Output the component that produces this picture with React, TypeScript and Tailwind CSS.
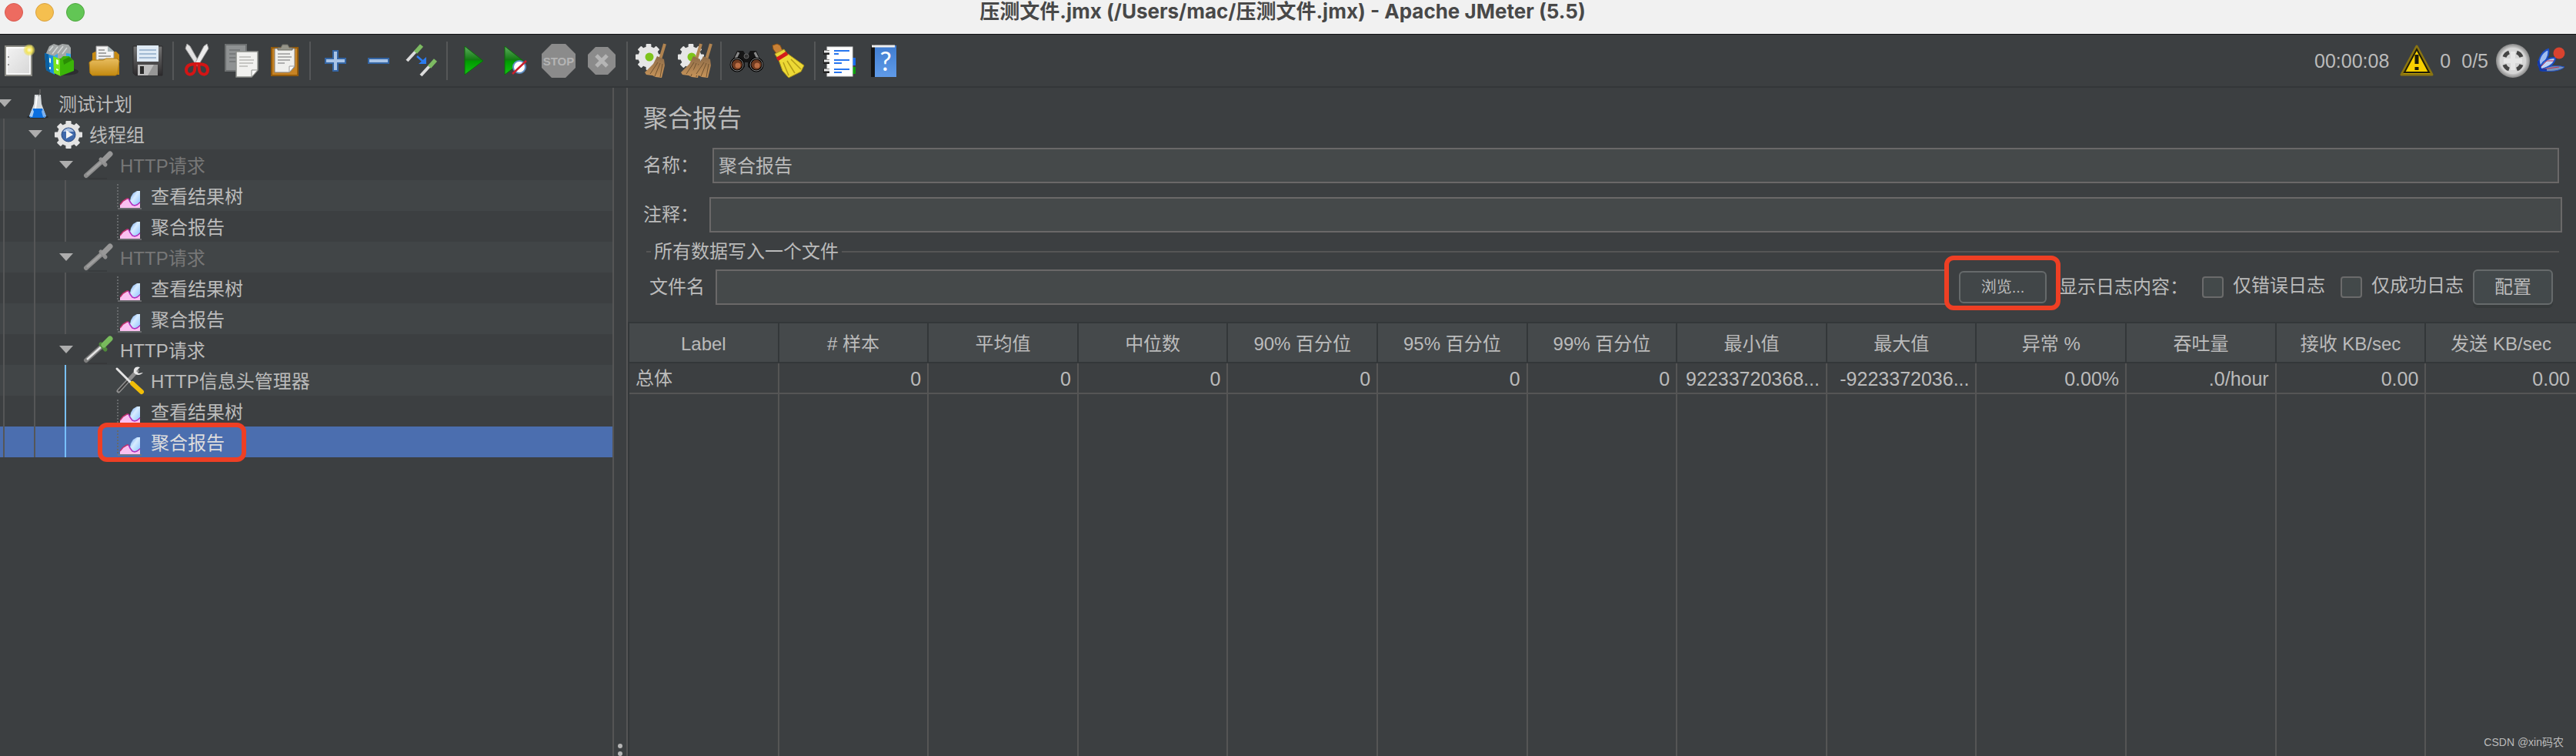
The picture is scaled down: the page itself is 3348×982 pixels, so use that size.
import React, { useState } from 'react'

type IconProps = { children: React.ReactNode; size?: string; box?: string }

const Icon: React.FC<IconProps> = ({ children, size = 'size-11', box = '0 0 44 44' }) => (
  <svg viewBox={box} className={`${size} shrink-0 overflow-visible`} fill="none" aria-hidden="true">
    {children}
  </svg>
)

const Gradients: React.FC = () => (
  <svg width="0" height="0" className="absolute" aria-hidden="true">
    <defs>
      <linearGradient id="paper" x1="0" y1="0" x2="1" y2="1">
        <stop offset="0" stopColor="#f4f4f4" />
        <stop offset="1" stopColor="#d6d6d6" />
      </linearGradient>
      <linearGradient id="folder" x1="0" y1="0" x2="0" y2="1">
        <stop offset="0" stopColor="#e8bd60" />
        <stop offset="1" stopColor="#c48a10" />
      </linearGradient>
      <linearGradient id="play" x1="0" y1="0" x2="0" y2="1">
        <stop offset="0" stopColor="#5fae5f" />
        <stop offset="0.48" stopColor="#127a12" />
        <stop offset="0.52" stopColor="#009a00" />
        <stop offset="1" stopColor="#12c412" />
      </linearGradient>
      <linearGradient id="steel" x1="0" y1="0" x2="0" y2="1">
        <stop offset="0" stopColor="#777" />
        <stop offset="1" stopColor="#2c2a2c" />
      </linearGradient>
      <linearGradient id="straw" x1="0" y1="0" x2="0" y2="1">
        <stop offset="0" stopColor="#8d6b48" />
        <stop offset="1" stopColor="#c9955a" />
      </linearGradient>
      <linearGradient id="book" x1="0" y1="0" x2="0" y2="1">
        <stop offset="0" stopColor="#3f7cd0" />
        <stop offset="1" stopColor="#609be8" />
      </linearGradient>
      <linearGradient id="peak" x1="0" y1="0" x2="1" y2="1">
        <stop offset="0" stopColor="#5d9bf0" />
        <stop offset="0.45" stopColor="#d8ecff" />
        <stop offset="1" stopColor="#8fc3ff" />
      </linearGradient>
      <radialGradient id="ball">
        <stop offset="0" stopColor="#fff" />
        <stop offset="0.7" stopColor="#ddd" />
        <stop offset="1" stopColor="#888" />
      </radialGradient>
      <radialGradient id="glow">
        <stop offset="0" stopColor="#fffde0" />
        <stop offset="0.5" stopColor="#f5e65a" />
        <stop offset="1" stopColor="#e8dc50" stopOpacity="0.3" />
      </radialGradient>
    </defs>
  </svg>
)

const NewIcon = () => (
  <Icon>
    <rect x="5" y="3" width="34" height="38" fill="url(#paper)" stroke="#8a8a84" strokeWidth="2" />
    <rect x="7" y="5" width="30" height="34" stroke="#fff" strokeWidth="1.5" />
    <path d="M8 16h2v2H8zM8 26h2v2H8z" fill="#999" />
    <circle cx="36" cy="8" r="7.5" fill="url(#glow)" />
  </Icon>
)

const TemplatesIcon = () => (
  <Icon>
    <ellipse cx="26" cy="36" rx="18" ry="5" fill="#2c2e30" />
    <path d="M2 12L6 3l6-3 6 2 5-2 8 1 3 4v14H2z" fill="#a3a7a7" />
    <path d="M6 9l5-6M10 13l7-9M17 12l7-9M23 13l6-8" stroke="#d3d7d7" strokeWidth="1.500" />
    <path d="M0 12l13 4v24L2 34z" fill="#1d8fdc" />
    <path d="M0 12l5 1.500 2 24-5-3.500z" fill="#0b5fa0" />
    <path d="M13 15l4-2v6l-4 2zM28 12l6 1v7l-6 2z" fill="#39a9ea" />
    <path d="M11 16l10 4v22l-9-4z" fill="#7be61c" />
    <path d="M20 20l4-4h8l6 6v13l-18 7z" fill="#3bb408" />
    <path d="M24 21l8-4 4 4-11 6z" fill="#2a8d04" />
    <path d="M15 20l3 1v6l-3-1zM15 32l3 1v2l-3-1zM6 18l2 1v6l-2-1zM6 30h2v3H6z" fill="#eaffea" />
  </Icon>
)

const OpenIcon = () => (
  <Icon>
    <path d="M6 12l4-2h27l4 4v26H6z" fill="#c68a12" />
    <path d="M11 3h15l8 7v14H11z" fill="#f2f2f2" stroke="#999" />
    <path d="M26 3v7h8z" fill="#a9b6b8" />
    <path d="M14 8h8M14 12h10M14 16h16M14 20h14" stroke="#8d8d8d" strokeWidth="1.500" />
    <path d="M2 24l4-3h14l4-2h14l3 3-2 17-3 2H6l-3-3z" fill="url(#folder)" stroke="#b47d0c" />
  </Icon>
)

const SaveIcon = () => (
  <Icon>
    <path d="M3 3h38v38H6l-3-3z" fill="url(#steel)" stroke="#2b2b2d" />
    <rect x="8" y="2" width="28" height="21" fill="#dfeaf5" />
    <path d="M11 8h22M11 13h22M11 18h22" stroke="#8fabc8" strokeWidth="1.500" />
    <rect x="9" y="27" width="26" height="14" fill="#bdbdbd" />
    <path d="M22 41l8-14h5v14z" fill="#969696" />
    <rect x="12" y="29" width="5" height="10" fill="#2a2a2a" />
  </Icon>
)

const CutIcon = () => (
  <Icon>
    <path d="M7 0l4 3 13 23-4 3L5 6z" fill="#e2e2e2" stroke="#9b9b9b" />
    <path d="M33 0l-4 3-12 23 4 3L35 6z" fill="#ececec" stroke="#a0a0a0" />
    <path d="M18 26c-5 0-12 1-12 8 0 8 10 7 11 0zM22 26c5 0 12 1 12 8 0 8-10 7-11 0z" stroke="#d41515" strokeWidth="4" />
  </Icon>
)

const CopyIcon = () => (
  <Icon>
    <rect x="1" y="1" width="27" height="34" fill="#8f9293" stroke="#6d7071" strokeWidth="2" />
    <path d="M6 8h14M6 13h9M6 18h9M6 23h9" stroke="#717475" strokeWidth="1.500" />
    <path d="M15 10h28v24l-8 9H15z" fill="#f1f1ef" stroke="#8c8e8a" strokeWidth="1.500" />
    <path d="M43 34h-8v9z" fill="#fff" stroke="#8c8e8a" />
    <path d="M19 17h15M19 21h19M19 25h18M19 29h11" stroke="#b9b9b6" strokeWidth="1.500" />
  </Icon>
)

const PasteIcon = () => (
  <Icon>
    <rect x="5" y="5" width="34" height="36" fill="#c78324" stroke="#925a0b" strokeWidth="2" />
    <path d="M9 6h26v24l-7 7H9z" fill="#efefed" stroke="#85807a" />
    <path d="M35 29h-7v8z" fill="#fff" stroke="#999" />
    <path d="M13 13h16M13 17h18M13 21h16M13 25h9" stroke="#9a9a9a" strokeWidth="1.500" />
    <path d="M13 8V5h4l2-4h7l2 4h4v3z" fill="#96958a" stroke="#6b6b62" />
  </Icon>
)

const PlusIcon = () => (
  <Icon>
    <path d="M19 9h6v10h10v6H25v10h-6V25H9v-6h10z" fill="#a9c4e6" stroke="#3465a4" strokeWidth="2" />
  </Icon>
)

const MinusIcon = () => (
  <Icon>
    <path d="M9 19h26v6H9z" fill="#a9c4e6" stroke="#3465a4" strokeWidth="2" />
  </Icon>
)

const ToggleIcon = () => (
  <Icon>
    <path d="M3 22L15 9" stroke="#dcdcdc" strokeWidth="4" />
    <path d="M14 11l8-9" stroke="#7dbb62" strokeWidth="5.500" />
    <path d="M21 41l12-13" stroke="#dcdcdc" strokeWidth="4" />
    <path d="M32 30l8-9" stroke="#7dbb62" strokeWidth="5.500" />
    <path d="M16 16l8 7" stroke="#2b7bf0" strokeWidth="2.500" />
    <path d="M28 17v9H18z" fill="#2b7bf0" />
  </Icon>
)

const PlayIcon = () => (
  <Icon>
    <path d="M12 3l24 19-24 18z" fill="url(#play)" stroke="#0c6a0c" />
  </Icon>
)

const PlayNoPauseIcon = () => (
  <Icon>
    <path d="M8 3l24 19L8 40z" fill="url(#play)" stroke="#0c6a0c" />
    <circle cx="27" cy="30" r="8" fill="#fff" stroke="#5f8fc4" strokeWidth="2" />
    <path d="M18 39l18-17" stroke="#c8202c" strokeWidth="2.500" />
  </Icon>
)

const StopIcon = () => (
  <Icon>
    <path d="M13 0h18l13 13v18L31 44H13L0 31V13z" fill="#8b8b8b" />
    <text x="22" y="28" textAnchor="middle" fontSize="15" fontWeight="bold" fill="#b4b4b4">
      STOP
    </text>
  </Icon>
)

const ShutdownIcon = () => (
  <Icon>
    <path d="M14 4h16l10 10v16L30 40H14L4 30V14z" fill="#8b8b8b" />
    <path d="M15 15l14 14M29 15L15 29" stroke="#b5b5b5" strokeWidth="5" />
  </Icon>
)

const ToothedWheel: React.FC<{ cx: number; cy: number; r: number; fill: string }> = ({ cx, cy, r, fill }) => (
  <g transform={`translate(${cx} ${cy})`}>
    <circle r={r * 0.8} fill={fill} />
    {[0, 45, 90, 135].map((a) => (
      <rect key={a} x={-r * 0.2} y={-r} width={r * 0.4} height={r * 2} rx="1" fill={fill} transform={`rotate(${a})`} />
    ))}
  </g>
)

const Broom: React.FC<{ x: number }> = ({ x }) => (
  <g transform={`translate(${x} 0)`}>
    <path d="M38 0l-6 20" stroke="#b08350" strokeWidth="4" />
    <path d="M28 16l9 4 1 8-4 16-8-1-4-2-8-1-2-3 11-11z" fill="url(#straw)" />
    <path d="M29 24L19 39M32 25l-7 17M35 26l-3 17" stroke="#6f5230" strokeWidth="1" />
  </g>
)

const ClearIcon = () => (
  <Icon>
    <ToothedWheel cx={17} cy={17} r={17} fill="#e6e6e6" />
    <circle cx="18" cy="17" r="5.500" fill="#7ec41c" />
    <Broom x={0} />
  </Icon>
)

const ClearAllIcon = () => (
  <Icon>
    <ToothedWheel cx={16} cy={17} r={17} fill="#e6e6e6" />
    <circle cx="17" cy="17" r="5.500" fill="#7ec41c" />
    <Broom x={-9} />
    <Broom x={4} />
  </Icon>
)

const SearchIcon = () => (
  <Icon>
    <path d="M10 9h8l3 5h3l3-5h8l8 18-10 8-9-5v-6h-4v6l-9 5-10-8z" fill="#151515" />
    <path d="M12 11L6 23M33 11l6 12" stroke="#8a8a8a" strokeWidth="3" />
    <circle cx="22" cy="16" r="3" fill="#333" stroke="#666" />
    <circle cx="10" cy="27" r="8" fill="#6e3a20" stroke="#000" strokeWidth="3" />
    <circle cx="35" cy="27" r="8" fill="#6e3a20" stroke="#000" strokeWidth="3" />
    <circle cx="10" cy="27" r="8" stroke="#858585" />
    <circle cx="35" cy="27" r="8" stroke="#858585" />
    <circle cx="11" cy="28" r="3.500" fill="#b96c43" />
    <circle cx="36" cy="28" r="3.500" fill="#b96c43" />
  </Icon>
)

const ResetSearchIcon = () => (
  <Icon>
    <path d="M0 2l6-2 4 2 4 9-7 4-6-8z" fill="#c98136" stroke="#8c5214" />
    <path d="M3 13l12-6 4 6-11 8z" fill="#e8d33a" stroke="#a8921a" />
    <path d="M8 21l12-8 21 15-4 8-16 8-8-9z" fill="#edd935" stroke="#a8921a" />
    <path d="M14 24l7 17M19 22l10 16M24 20l13 13" stroke="#b59d18" strokeWidth="1.500" />
    <path d="M6 20l13-8" stroke="#d31b1b" strokeWidth="5" />
  </Icon>
)

const FunctionIcon = () => (
  <Icon>
    <path d="M36 18h6v10h-6z" fill="#1a6df0" />
    <path d="M36 30h6v9h-6z" fill="#0ca00c" />
    <rect x="5" y="4" width="33" height="38" fill="#fff" stroke="#ddd" />
    <path d="M0 11h8M0 23h8M0 35h8" stroke="#222" strokeWidth="6" />
    <path d="M1 10h7M1 22h7M1 34h7" stroke="#e8e8e8" strokeWidth="3" />
    <path d="M14 9h20M14 13h6M14 21h20M14 25h10M14 33h20M14 37h10" stroke="#2876ee" strokeWidth="2" />
  </Icon>
)

const HelpIcon = () => (
  <Icon>
    <path d="M6 2l5-1v42H6z" fill="#151515" />
    <rect x="11" y="2" width="28" height="41" fill="url(#book)" />
    <path d="M7 3h30" stroke="#eee" strokeWidth="3" />
    <text x="25" y="35" textAnchor="middle" fontSize="34" fill="#fff" className="font-[Lato,sans-serif]">
      ?
    </text>
  </Icon>
)

const WarningIcon = () => (
  <Icon>
    <path d="M22 3l20 37H2z" fill="#f8d000" stroke="#8a7410" strokeWidth="3" strokeLinejoin="round" />
    <path d="M22 7l16 30H6z" stroke="#1f1c08" strokeWidth="2" />
    <path d="M22 14v12" stroke="#1f1c08" strokeWidth="5" />
    <path d="M22 30v4" stroke="#1f1c08" strokeWidth="5" />
  </Icon>
)

const ServersIcon = () => (
  <Icon>
    <circle cx="22" cy="22" r="22" fill="url(#ball)" />
    <circle cx="22" cy="22" r="17" fill="#d6d6d6" />
    <path d="M11 17c1-3 3-5 6-6M27 11c3 1 5 3 6 6M33 27c-1 3-3 5-6 6M17 33c-3-1-5-3-6-6" stroke="#444" strokeWidth="5" />
    <path d="M22 10v24M10 22h24" stroke="#e6e6e6" strokeWidth="6" />
  </Icon>
)

const LoggerIcon = () => (
  <Icon>
    <path d="M5 27c1-9 5-17 13-20 2 8-3 16-11 24z" fill="#9fbdf0" stroke="#1d4fc4" strokeWidth="2" />
    <path d="M7 31c4-9 11-13 20-13 0 7-8 13-18 15z" fill="#c3d4f4" stroke="#1d4fc4" strokeWidth="2" />
    <path d="M8 34c9-5 19-7 31-4-6 6-20 6-30 5z" fill="#7a92b4" stroke="#1d4fc4" />
    <path d="M8 30l8-8 9 0M10 33l22-3" stroke="#c03050" />
    <path d="M5 22l3 12h8" stroke="#1338a8" strokeWidth="3" />
    <circle cx="32" cy="12" r="7.500" fill="#d8432f" />
  </Icon>
)

const FlaskIcon = () => (
  <Icon size="size-10" box="0 0 40 40">
    <ellipse cx="21" cy="38" rx="14" ry="2" fill="#26292b" />
    <path d="M17 9h8l1 12 6 16-2 2H12l-2-2 6-16z" fill="#d5d9dc" />
    <path d="M15 27h12l5 10-3 2H12l-2-2z" fill="#0a6fe0" />
    <path d="M10 37l4-10 2 4-2 7z" fill="#a9cbf0" />
    <path d="M32 37l-4-10-2 4 2 7z" fill="#7fb2ee" />
    <path d="M20 11l-2 16" stroke="#fff" strokeWidth="2" />
    <path d="M24 2v5l-2 4" stroke="#777" />
  </Icon>
)

const ThreadGroupIcon = () => (
  <Icon size="size-10" box="0 0 40 40">
    <ToothedWheel cx={21} cy={21} r={18} fill="#e4e4e4" />
    <circle cx="21" cy="21" r="9" fill="#3f68aa" stroke="#24457c" />
    <path d="M14 17c3-6 11-6 14 0z" fill="#a9c0e2" />
    <path d="M18 15l9 6-9 5z" fill="#f4f4f4" />
  </Icon>
)

const SamplerIcon: React.FC<{ disabled?: boolean }> = ({ disabled }) => (
  <Icon size="size-10" box="0 0 40 40">
    <path d="M7 38h24" stroke="#323537" strokeWidth="1" />
    <path d="M4 34L23 17" stroke={disabled ? '#8c8c8c' : '#7c7c7c'} strokeWidth="6" strokeLinecap="round" />
    <path d="M5 33l19-17" stroke={disabled ? '#a0a0a0' : '#e4e4e4'} strokeWidth="2.500" />
    <path d="M23 13l6 7" stroke={disabled ? '#8f8f8f' : '#4f8a3a'} strokeWidth="5" strokeLinecap="round" />
    <path d="M27 14l8-8" stroke={disabled ? '#989898' : '#78bb5c'} strokeWidth="7" strokeLinecap="round" />
  </Icon>
)

const ChartIcon = () => (
  <Icon size="size-10" box="0 0 40 40">
    <path d="M5 5v32" stroke="#66696b" strokeWidth="2" strokeDasharray="2 2" />
    <path d="M5 37h31" stroke="#77797b" strokeWidth="1.500" />
    <path d="M34 14h-4l-5 3-3 5-1 5 3 5h6l4-4z" fill="url(#peak)" />
    <path d="M8 36v-4l4-5 5-3h2l5 8 4 1 6-4v7z" fill="#fac0f0" />
    <path d="M8 32l4-5 5-3h2" stroke="#c0306c" strokeWidth="1.500" />
    <path d="M19 24l2 4 3 4 3 1 3-1 4-3" stroke="#b02fc0" strokeWidth="1.500" />
  </Icon>
)

const ConfigIcon = () => (
  <Icon size="size-10" box="0 0 40 40">
    <path d="M6 34L30 8" stroke="#8e8e8e" strokeWidth="5" strokeLinecap="round" />
    <path d="M6 34l14-15" stroke="#3a3a3a" strokeWidth="2" />
    <path d="M34 3c-6-2-9 2-8 7 3 4 8 4 12 0l-6 1-3-3z" fill="#e8e8e8" />
    <path d="M4 5l18 18" stroke="#e4e4e4" strokeWidth="3" strokeLinecap="round" />
    <path d="M24 24l12 11" stroke="#f0bd08" strokeWidth="6" strokeLinecap="round" />
  </Icon>
)

const toolGroups = [
  [
    { name: '新建', Glyph: NewIcon },
    { name: '模板', Glyph: TemplatesIcon },
    { name: '打开', Glyph: OpenIcon },
    { name: '保存', Glyph: SaveIcon }
  ],
  [
    { name: '剪切', Glyph: CutIcon },
    { name: '复制', Glyph: CopyIcon },
    { name: '粘贴', Glyph: PasteIcon }
  ],
  [
    { name: '展开', Glyph: PlusIcon },
    { name: '折叠', Glyph: MinusIcon },
    { name: '切换', Glyph: ToggleIcon }
  ],
  [
    { name: '启动', Glyph: PlayIcon },
    { name: '不停顿开始', Glyph: PlayNoPauseIcon },
    { name: '停止', Glyph: StopIcon },
    { name: '关闭', Glyph: ShutdownIcon }
  ],
  [
    { name: '清除', Glyph: ClearIcon },
    { name: '清除全部', Glyph: ClearAllIcon }
  ],
  [
    { name: '查找', Glyph: SearchIcon },
    { name: '重置搜索', Glyph: ResetSearchIcon }
  ],
  [
    { name: '函数助手', Glyph: FunctionIcon },
    { name: '帮助', Glyph: HelpIcon }
  ]
]

type TreeNode = { level: number; label: string; icon: React.ReactNode; open?: boolean; disabled?: boolean; active?: boolean; selected?: boolean }

const treeNodes: TreeNode[] = [
  { level: 0, label: '测试计划', icon: <FlaskIcon />, open: true },
  { level: 1, label: '线程组', icon: <ThreadGroupIcon />, open: true },
  { level: 2, label: 'HTTP请求', icon: <SamplerIcon disabled />, open: true, disabled: true },
  { level: 3, label: '查看结果树', icon: <ChartIcon /> },
  { level: 3, label: '聚合报告', icon: <ChartIcon /> },
  { level: 2, label: 'HTTP请求', icon: <SamplerIcon disabled />, open: true, disabled: true },
  { level: 3, label: '查看结果树', icon: <ChartIcon /> },
  { level: 3, label: '聚合报告', icon: <ChartIcon /> },
  { level: 2, label: 'HTTP请求', icon: <SamplerIcon />, open: true },
  { level: 3, label: 'HTTP信息头管理器', icon: <ConfigIcon />, active: true },
  { level: 3, label: '查看结果树', icon: <ChartIcon />, active: true },
  { level: 3, label: '聚合报告', icon: <ChartIcon />, active: true, selected: true }
]

const columns = [
  { title: 'Label', value: '总体' },
  { title: '# 样本', value: '0' },
  { title: '平均值', value: '0' },
  { title: '中位数', value: '0' },
  { title: '90% 百分位', value: '0' },
  { title: '95% 百分位', value: '0' },
  { title: '99% 百分位', value: '0' },
  { title: '最小值', value: '92233720368...' },
  { title: '最大值', value: '-9223372036...' },
  { title: '异常 %', value: '0.00%' },
  { title: '吞吐量', value: '.0/hour' },
  { title: '接收 KB/sec', value: '0.00' },
  { title: '发送 KB/sec', value: '0.00' }
]

const TitleBar: React.FC = () => (
  <header className="flex h-[45px] items-start border-b border-[#101214] bg-[#f1f1f1]">
    <div className="flex w-28 gap-4 pt-1 pl-1.5">
      <span className="size-6 rounded-full border border-[#d85a50] bg-[#ed6b60]" />
      <span className="size-6 rounded-full border border-[#d9a240] bg-[#f5bf4f]" />
      <span className="size-6 rounded-full border border-[#4fa73f] bg-[#62c655]" />
    </div>
    <h1 className="flex-1 text-center font-[Inter,'Noto_Sans_CJK_SC',sans-serif] text-[26px] leading-[30px] font-bold whitespace-nowrap text-[#484848]">
      压测文件.jmx (/Users/mac/压测文件.jmx) - Apache JMeter (5.5)
    </h1>
    <div className="w-[126px]" />
  </header>
)

const Toolbar: React.FC = () => (
  <div className="flex h-[69px] items-center border-b-2 border-[#333638] pr-2.5 pl-0.5">
    {toolGroups.map((group, i) => (
      <React.Fragment key={i}>
        {i > 0 && <span className="mx-2.5 h-[50px] w-0.5 bg-[#555758]" />}
        <div className="flex gap-3">
          {group.map(({ name, Glyph }) => (
            <button key={name} type="button" aria-label={name}>
              <Glyph />
            </button>
          ))}
        </div>
      </React.Fragment>
    ))}
    <div className="ml-auto flex items-center">
      <span className="pt-0.5 text-[25px]">00:00:08</span>
      <button type="button" aria-label="日志" className="mr-2 ml-3.5">
        <WarningIcon />
      </button>
      <span className="pt-0.5 text-[25px]">0</span>
      <span className="mr-2.5 ml-3.5 pt-0.5 text-[25px]">0/5</span>
      <ServersIcon />
      <span className="ml-1.5">
        <LoggerIcon />
      </span>
    </div>
  </div>
)

const TreeRow: React.FC<{ node: TreeNode }> = ({ node }) => {
  const background = node.selected ? 'bg-[#4b6eaf] text-[#dddddd]' : node.disabled ? 'text-[#777777] even:bg-[#414547]' : 'even:bg-[#414547]'
  return (
    <li className={`relative flex h-10 items-center ${background}`}>
      {Array.from({ length: node.level }, (_, i) => (
        <span key={i} className="h-full w-10 pl-1">
          <span className={`block h-full w-0.5 ${node.active && i === 2 ? 'bg-[#78c0ff]' : 'bg-[#555657]'}`} />
        </span>
      ))}
      <span className="w-7">
        {node.open && (
          <svg viewBox="0 0 28 10" className="h-2.5 w-7 overflow-visible" aria-hidden="true">
            <path d="M-3 0h18L6 10z" fill="#adadad" />
          </svg>
        )}
      </span>
      {node.icon}
      <span className="ml-2 pt-[3px] whitespace-nowrap">{node.label}</span>
      {node.selected && <span className="absolute -top-[5px] left-[127px] z-10 h-[51px] w-[193px] rounded-[12px] border-[6px] border-[#ee3f24]" />}
    </li>
  )
}

const inputStyle = 'h-[46px] min-w-0 flex-1 border-2 border-[#6a6868] bg-[#45494a] px-1.5 pb-1 outline-none'
const checkboxStyle = 'size-7 shrink-0 appearance-none rounded-[4px] border-2 border-[#6b6b6b] bg-[#43494a] checked:bg-[#4b6eaf]'

const App: React.FC = () => {
  const [name, setName] = useState('聚合报告')
  const [comment, setComment] = useState('')
  const [fileName, setFileName] = useState('')

  return (
    <div className="relative flex min-h-screen flex-col bg-[#3c3f41] font-['Liberation_Sans','Noto_Sans_CJK_SC',sans-serif] text-2xl text-[#bbbbbb]">
      <Gradients />
      <TitleBar />
      <Toolbar />
      <div className="flex flex-1">
        <nav className="w-[798px] shrink-0 border-r-2 border-[#555555]">
          <ul>
            {treeNodes.map((node, i) => (
              <TreeRow key={i} node={node} />
            ))}
          </ul>
        </nav>
        <div className="flex w-4 shrink-0 flex-col items-center justify-end gap-1 overflow-hidden">
          <span className="size-1.5 rounded-full bg-[#b5b5b5]" />
          <span className="size-1.5 rounded-full bg-[#b5b5b5]" />
        </div>
        <main className="flex min-w-0 flex-1 flex-col border-l-2 border-[#555555] pt-5">
          <h2 className="pl-5 text-[32px] leading-10">聚合报告</h2>
          <div className="mt-[18px] mr-[22px] flex items-center pl-5">
            <label htmlFor="name" className="w-[90px]">名称：</label>
            <input id="name" type="text" value={name} onChange={(e) => setName(e.target.value)} className={inputStyle} />
          </div>
          <div className="mt-[18px] mr-[18px] flex items-center pl-5">
            <label htmlFor="comment" className="w-[86px]">注释：</label>
            <input id="comment" type="text" value={comment} onChange={(e) => setComment(e.target.value)} className={inputStyle} />
          </div>
          <fieldset className="mr-[22px] ml-6 mt-3 border-t-2 border-[#555555] pt-2.5 pb-[22px]">
            <legend className="ml-1.5 px-1 leading-[26px]">所有数据写入一个文件</legend>
            <div className="flex items-center pr-2 pl-1">
              <label htmlFor="file" className="w-[86px]">文件名</label>
              <input id="file" type="text" value={fileName} onChange={(e) => setFileName(e.target.value)} className={inputStyle} />
              <div className="relative ml-4">
                <button type="button" className="block h-[42px] w-[114px] rounded-md border-2 border-[#666a6b] bg-[#414648] text-xl">浏览...</button>
                <span className="pointer-events-none absolute -top-5 -right-[18px] -bottom-[9px] -left-[19px] z-10 rounded-[12px] border-[6px] border-[#ee3f24]" />
              </div>
              <span className="ml-4">显示日志内容：</span>
              <input id="errors" type="checkbox" className={`ml-[18px] ${checkboxStyle}`} />
              <label htmlFor="errors" className="ml-3 pb-1">仅错误日志</label>
              <input id="successes" type="checkbox" className={`ml-5 ${checkboxStyle}`} />
              <label htmlFor="successes" className="ml-3 pb-1">仅成功日志</label>
              <button type="button" className="ml-3 h-[46px] w-[104px] rounded-md border-2 border-[#666a6b] bg-[#43494b] shadow-[0_4px_0_#363a3b]">配置</button>
            </div>
          </fieldset>
          <div className="grid flex-1 border-l-2 border-[#333739]">
            <table className="h-full w-full table-fixed border-separate border-spacing-0">
              <thead>
                <tr>
                  {columns.map((column) => (
                    <th key={column.title} scope="col" className="h-[54px] border-y-2 border-r-2 border-[#333739] bg-[#45494b] pt-1 font-normal whitespace-nowrap last:border-r-0">
                      {column.title}
                    </th>
                  ))}
                </tr>
              </thead>
              <tbody>
                <tr>
                  {columns.map((column) => (
                    <td key={column.title} className="h-10 border-r-2 border-b-2 border-[#555555] px-2 pt-0.5 text-right text-[25px] leading-9 whitespace-nowrap first:text-left first:text-2xl first:leading-9 last:border-r-0">
                      {column.value}
                    </td>
                  ))}
                </tr>
                <tr className="h-full">
                  {columns.map((column) => (
                    <td key={column.title} className="border-r-2 border-[#555555] last:border-r-0" />
                  ))}
                </tr>
              </tbody>
            </table>
          </div>
        </main>
      </div>
      <span className="absolute right-4 bottom-2 text-sm">CSDN @xin码农</span>
    </div>
  )
}

export default App
